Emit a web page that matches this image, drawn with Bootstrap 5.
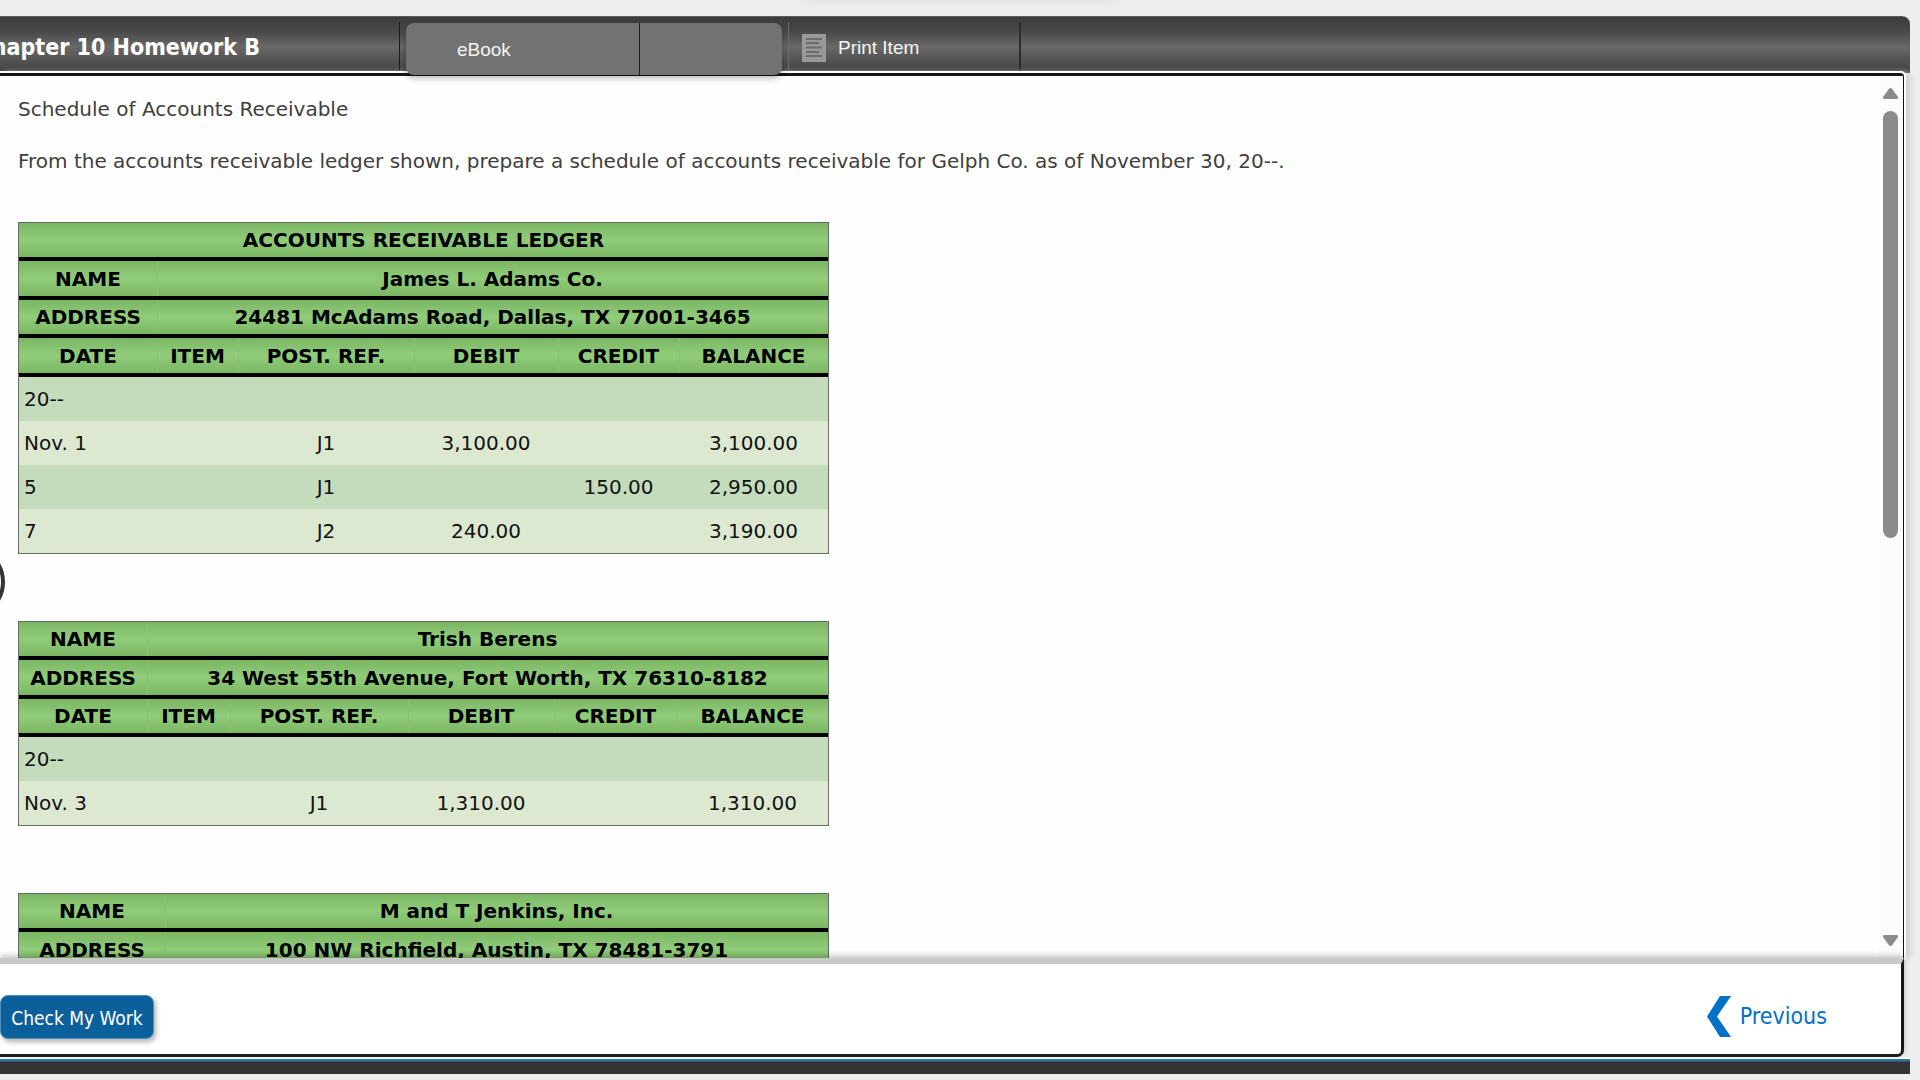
<!DOCTYPE html>
<html lang="en">
<head>
<meta charset="utf-8">
<meta name="viewport" content="width=device-width, initial-scale=1">
<title>Chapter 10 Homework B</title>
<link href="https://cdn.jsdelivr.net/npm/bootstrap@5.3.0/dist/css/bootstrap.min.css" rel="stylesheet">
<style>
  body { background: #efefef; color: #404040; font-family: "DejaVu Sans", sans-serif; font-size: 20px; line-height: 24px; }
  .top-strip { height: 16px; }
  .top-strip::before { content: ""; width: 310px; height: 4px; margin-top: -6px; margin-left: 805px; box-shadow: 0 0 12px rgba(0,0,0,.2); }
  .frame { margin-right: 10px; min-height: 0; }
  .titlebar { height: 57px; padding-top: 5px; border-top: 1px solid #5c5c5c; border-top-right-radius: 8px;
    background: linear-gradient(#3c3c3c, #484848 25%, #686868 53%, #464646 92%, #464646); }
  .bar-title { width: 400px; padding-right: 139px; border-right: 1px solid #1c1c1c; white-space: nowrap; 
    font: bold 23px/50px "DejaVu Sans Condensed", "DejaVu Sans", sans-serif; font-stretch: condensed; color: #fff; }
  .bar-tabs { width: 376px; height: 52px; margin: 1px 6px 0 6px; background: #727272; border-radius: 8px; box-shadow: 0 3px 6px rgba(0,0,0,.3); z-index: 2; }
  .bar-link { font: 19px/54px "Liberation Sans", sans-serif; color: #f4f4f4; text-decoration: none; }
  .tab-book { width: 234px; padding-left: 51px; border-right: 1px solid #1c1c1c; }
  .print-link { width: 233px; gap: 12px; padding-left: 13px; border-left: 1px solid #6a6a6a; border-right: 2px solid #2c2c2c; line-height: 48px; }
  .pane { min-height: 0; margin-right: 6px; border-right: 1px solid #111; outline: 2px solid #fff; box-shadow: 6px 0 6px #ccc; background: #fefefe; border-top: 3px solid #1a171b; border-top-right-radius: 3px; }
  .reading { padding: 21px 18px 0; overflow-y: auto; scrollbar-width: none; min-width: 0; }
  .reading::-webkit-scrollbar { display: none; }
  .reading p { margin: 0 0 28px; }
  .ledger { width: 811px; margin: 49px 0 67px; border: 1px solid #666c66; border-collapse: separate; border-spacing: 0; table-layout: fixed; color: #111; }
  .ledger + .ledger { margin-top: 0; }
  .ledger th { height: 38px; padding: 0; text-align: center; line-height: 24px; color: #000; border-bottom: 4px solid #000;
    background: linear-gradient(#7bb663, #90cc7a 50%, #7bb663) padding-box; }
  .ledger tr:nth-child(even) th { height: 39px; }
  .ledger th + th { box-shadow: inset 1px 0 #88c273; }
  .ledger td { height: 44px; padding: 0 5px; text-align: center; background: #c4dcbb; }
  .ledger tbody tr:nth-child(even) td { background: #dce8d0; }
  .ledger td:first-child { text-align: left; }
  .track { width: 25px; padding: 12px 5px; background: #fcfcfc; }
  .thumb { height: 427px; margin-top: 12px; border-radius: 8px; background: #8b8b8b; }
  .bottom-bar { z-index: 3; height: 99px; margin-right: 6px; padding: 31px 74px 0 0; border-right: 3px solid #151515; border-bottom: 3px solid #1c1c1c;
    border-bottom-right-radius: 7px; border-top: 6px solid #c9c9c9; background: #fff; box-shadow: 0 -2px 6px rgba(0,0,0,.25); }
  .check-btn { width: 154px; height: 44px; padding: 0; border: 1px solid #4f8fba; border-radius: 8px; background: #0b609b; color: #fff; white-space: nowrap;
    box-shadow: 2px 3px 5px rgba(0,0,0,.3); font: 19px/44px "DejaVu Sans Condensed", "DejaVu Sans", sans-serif; font-stretch: condensed; }
  .prev-link { gap: 9px; height: 42px; color: #0071c5; text-decoration: none; font: 23px/42px "DejaVu Sans Condensed", "DejaVu Sans", sans-serif; font-stretch: condensed; }
  .base { height: 17px; border-top: 2px solid #fff; background: linear-gradient(#2c7ba5 2px, #333 3px); }
  .gutter { height: 6px; }
  .drawer-btn { position: absolute; left: -69px; top: 545px; width: 74px; height: 74px; padding: 0; border: 4px solid #333; border-radius: 50%; background: #fff; z-index: 4; }
</style>
</head>
<body>
<div class="vh-100 d-flex flex-column overflow-hidden position-relative">
  <div class="top-strip d-flex flex-shrink-0"></div>
  <div class="frame d-flex flex-column flex-grow-1">
    <header class="titlebar d-flex flex-shrink-0">
      <div class="bar-title d-flex justify-content-end flex-shrink-0">hapter 10 Homework B</div>
      <nav class="bar-tabs d-flex flex-shrink-0"><a class="bar-link tab-book" href="#">eBook</a></nav>
      <a class="bar-link print-link d-flex align-items-center" href="#">
        <svg width="24" height="28" viewBox="0 0 24 28" aria-hidden="true"><path fill="#999" d="M0 0h24v28H0z"/><path stroke="#6c6c6c" stroke-width="2" d="M4 5h16M4 9h13M4 13.500h16M4 18h13M4 22h16"/></svg>
        Print Item
      </a>
    </header>
    <main class="pane d-flex flex-grow-1">
      <div class="reading flex-grow-1">
        <p>Schedule of Accounts Receivable</p>
        <p>From the accounts receivable ledger shown, prepare a schedule of accounts receivable for Gelph Co. as of November 30, 20--.</p>
        <table class="ledger">
          <colgroup><col style="width:138px"><col style="width:81px"><col style="width:176px"><col style="width:144px"><col style="width:121px"><col></colgroup>
          <thead>
            <tr><th colspan="6">ACCOUNTS RECEIVABLE LEDGER</th></tr>
            <tr><th>NAME</th><th colspan="5">James L. Adams Co.</th></tr>
            <tr><th>ADDRESS</th><th colspan="5">24481 McAdams Road, Dallas, TX 77001-3465</th></tr>
            <tr><th>DATE</th><th>ITEM</th><th>POST. REF.</th><th>DEBIT</th><th>CREDIT</th><th>BALANCE</th></tr>
          </thead>
          <tbody>
            <tr><td>20--</td><td></td><td></td><td></td><td></td><td></td></tr>
            <tr><td>Nov. 1</td><td></td><td>J1</td><td>3,100.00</td><td></td><td>3,100.00</td></tr>
            <tr><td>5</td><td></td><td>J1</td><td></td><td>150.00</td><td>2,950.00</td></tr>
            <tr><td>7</td><td></td><td>J2</td><td>240.00</td><td></td><td>3,190.00</td></tr>
          </tbody>
        </table>
        <table class="ledger">
          <colgroup><col style="width:128px"><col style="width:83px"><col style="width:178px"><col style="width:146px"><col style="width:123px"><col></colgroup>
          <thead>
            <tr><th>NAME</th><th colspan="5">Trish Berens</th></tr>
            <tr><th>ADDRESS</th><th colspan="5">34 West 55th Avenue, Fort Worth, TX 76310-8182</th></tr>
            <tr><th>DATE</th><th>ITEM</th><th>POST. REF.</th><th>DEBIT</th><th>CREDIT</th><th>BALANCE</th></tr>
          </thead>
          <tbody>
            <tr><td>20--</td><td></td><td></td><td></td><td></td><td></td></tr>
            <tr><td>Nov. 3</td><td></td><td>J1</td><td>1,310.00</td><td></td><td>1,310.00</td></tr>
          </tbody>
        </table>
        <table class="ledger">
          <colgroup><col style="width:146px"><col></colgroup>
          <thead>
            <tr><th>NAME</th><th>M and T Jenkins, Inc.</th></tr>
            <tr><th>ADDRESS</th><th>100 NW Richfield, Austin, TX 78481-3791</th></tr>
          </thead>
        </table>
      </div>
      <div class="track d-flex flex-column flex-shrink-0" aria-hidden="true">
        <svg width="15" height="11" viewBox="0 0 15 11"><path fill="#8b8b8b" d="M6 .8q1.500-1.600 3 0l6 8.200q.5 2-1.500 2h-12q-2 0-1.500-2z"/></svg>
        <div class="thumb"></div>
        <svg class="mt-auto" width="15" height="11" viewBox="0 0 15 11"><path fill="#8b8b8b" d="M6 10.200q1.500 1.600 3 0l6-8.200q.5-2-1.500-2h-12q-2 0-1.500 2z"/></svg>
      </div>
    </main>
    <footer class="bottom-bar d-flex justify-content-between flex-shrink-0">
      <button type="button" class="check-btn">Check My Work</button>
      <a class="prev-link d-flex align-items-center" href="#">
        <svg width="24" height="41" viewBox="0 0 24 41" aria-hidden="true"><path fill="#0071c9" d="M13 0h11L10 20.500 24 41H13L0 20.500z"/></svg>
        Previous
      </a>
    </footer>
    <div class="base flex-shrink-0"></div>
  </div>
  <div class="gutter flex-shrink-0"></div>
  <button type="button" class="drawer-btn" aria-label="Open drawer"></button>
</div>
<script src="https://cdn.jsdelivr.net/npm/bootstrap@5.3.0/dist/js/bootstrap.bundle.min.js"></script>
</body>
</html>
